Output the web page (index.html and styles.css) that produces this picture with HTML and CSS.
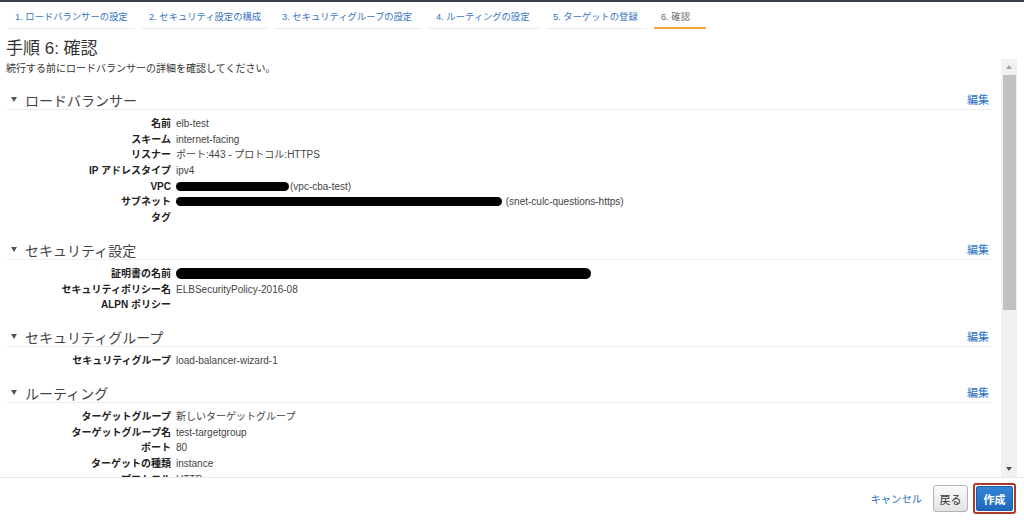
FILE: index.html
```html
<!DOCTYPE html>
<html lang="ja">
<head>
<meta charset="utf-8">
<title>手順 6: 確認</title>
<link rel="stylesheet" href="styles.css">
</head>
<body>
<div class="topbar"></div>
<nav class="tabs">
  <div class="tab t1">1. ロードバランサーの設定</div>
  <div class="tab t2">2. セキュリティ設定の構成</div>
  <div class="tab t3">3. セキュリティグループの設定</div>
  <div class="tab t4">4. ルーティングの設定</div>
  <div class="tab t5">5. ターゲットの登録</div>
  <div class="tab t6 current">6. 確認</div>
</nav>
<h1 class="title">手順 6: 確認</h1>
<div class="viewport">
  <div class="scroll">
    <p class="intro">続行する前にロードバランサーの詳細を確認してください。</p>

    <section class="sec">
      <div class="sec-head"><span class="caret"></span><span class="sec-title">ロードバランサー</span><a class="edit">編集</a></div>
      <dl class="rows">
        <dt>名前</dt><dd>elb-test</dd>
        <dt>スキーム</dt><dd>internet-facing</dd>
        <dt>リスナー</dt><dd>ポート:443 - プロトコル:HTTPS</dd>
        <dt>IP アドレスタイプ</dt><dd>ipv4</dd>
        <dt>VPC</dt><dd><span class="redact r-vpc"></span>(vpc-cba-test)</dd>
        <dt>サブネット</dt><dd><span class="redact r-subnet"></span> (snet-culc-questions-https)</dd>
        <dt>タグ</dt><dd></dd>
      </dl>
    </section>

    <section class="sec">
      <div class="sec-head"><span class="caret"></span><span class="sec-title">セキュリティ設定</span><a class="edit">編集</a></div>
      <dl class="rows">
        <dt>証明書の名前</dt><dd><span class="redact r-cert"></span></dd>
        <dt>セキュリティポリシー名</dt><dd>ELBSecurityPolicy-2016-08</dd>
        <dt>ALPN ポリシー</dt><dd></dd>
      </dl>
    </section>

    <section class="sec">
      <div class="sec-head"><span class="caret"></span><span class="sec-title">セキュリティグループ</span><a class="edit">編集</a></div>
      <dl class="rows">
        <dt>セキュリティグループ</dt><dd>load-balancer-wizard-1</dd>
      </dl>
    </section>

    <section class="sec">
      <div class="sec-head"><span class="caret"></span><span class="sec-title">ルーティング</span><a class="edit">編集</a></div>
      <dl class="rows">
        <dt>ターゲットグループ</dt><dd>新しいターゲットグループ</dd>
        <dt>ターゲットグループ名</dt><dd>test-targetgroup</dd>
        <dt>ポート</dt><dd>80</dd>
        <dt>ターゲットの種類</dt><dd>instance</dd>
        <dt>プロトコル</dt><dd>HTTP</dd>
      </dl>
    </section>
  </div>
  <div class="scrollbar">
    <div class="sb-btn"><span class="sb-up"></span></div>
    <div class="sb-thumb"></div>
    <div class="sb-fill"></div>
    <div class="sb-btn"><span class="sb-down"></span></div>
  </div>
</div>
<footer class="footer">
  <a class="cancel">キャンセル</a>
  <button class="btn-back">戻る</button>
  <div class="highlight"><button class="btn-create">作成</button></div>
</footer>
</body>
</html>
```
FILE: styles.css
```css
html, body {
  margin: 0;
  padding: 0;
  background: #ffffff;
}
body {
  width: 1024px;
  height: 526px;
  overflow: hidden;
  font-family: "Liberation Sans", "Noto Sans CJK JP", sans-serif;
  font-size: 10px;
  color: #333;
}
.topbar {
  height: 2px;
  background: #39404a;
}
.tabs {
  display: flex;
  gap: 7px;
  padding-left: 8px;
}
.tab {
  box-sizing: border-box;
  padding: 9px 0 4px 7px;
  line-height: 13px;
  font-size: 9.3px;
  color: #3674c0;
  white-space: nowrap;
  border-bottom: 1px solid #ececec;
}
.t1 { width: 127px; }
.t2 { width: 126px; }
.t3 { width: 147px; }
.t4 { width: 110px; }
.t5 { width: 101px; }
.t6 { width: 52px; }
.tab.current {
  color: #666;
  padding-bottom: 3px;
  border-bottom: 2px solid #f7a535;
}
.title {
  margin: 0;
  padding: 10px 0 0 6px;
  font-size: 17px;
  line-height: 20px;
  font-weight: normal;
  color: #333;
}
.viewport {
  display: flex;
  height: 418px;
}
.scroll {
  flex: 1;
  overflow: hidden;
}
.intro {
  margin: 0;
  padding: 4px 0 0 6px;
  line-height: 12px;
  font-size: 10px;
  color: #333;
}
.sec {
  margin: 18px 9px 0 7px;
}
.sec + .sec {
  margin-top: 17.3px;
}
.sec-head {
  display: flex;
  align-items: center;
  height: 16px;
  border-bottom: 1px solid #ededed;
}
.caret {
  width: 0;
  height: 0;
  margin: -3px 8px 0 4px;
  border-left: 3px solid transparent;
  border-right: 3px solid transparent;
  border-top: 5px solid #555;
}
.sec-title {
  flex: 1;
  font-size: 14px;
  line-height: 16px;
  color: #444;
}
.edit {
  align-self: flex-start;
  margin-top: 1px;
  padding-right: 3px;
  font-size: 11px;
  line-height: 12px;
  color: #1f6fc6;
}
.rows {
  display: grid;
  grid-template-columns: 164px 1fr;
  grid-auto-rows: 15.67px;
  column-gap: 5px;
  margin: 0;
  padding-top: 6px;
  line-height: 15.67px;
}
.rows dt {
  text-align: right;
  font-weight: bold;
  color: #222;
  white-space: nowrap;
}
.rows dd {
  margin: 0;
  color: #444;
  white-space: nowrap;
}
.redact {
  display: inline-block;
  height: 9px;
  background: #000;
  border-radius: 5px;
  vertical-align: -1px;
  margin-right: 1px;
}
.r-vpc { width: 113px; }
.r-subnet { width: 326px; }
.r-cert { width: 415px; height: 11px; border-radius: 6px; vertical-align: -2px; }

.scrollbar {
  display: flex;
  flex-direction: column;
  width: 16px;
  margin-right: 7px;
  background: #f1f1f1;
}
.sb-btn {
  height: 16px;
  display: flex;
  align-items: center;
  justify-content: center;
}
.sb-up {
  width: 0;
  height: 0;
  border-left: 3.5px solid transparent;
  border-right: 3.5px solid transparent;
  border-bottom: 4px solid #a3a3a3;
}
.sb-down {
  width: 0;
  height: 0;
  border-left: 3.5px solid transparent;
  border-right: 3.5px solid transparent;
  border-top: 4px solid #505050;
}
.sb-thumb {
  height: 235px;
  margin: 0 1px 0 2px;
  background: #c1c1c1;
}
.sb-fill {
  flex: 1;
}
.footer {
  display: flex;
  justify-content: flex-end;
  align-items: center;
  height: 31px;
  padding: 5px 8px 12px 0;
  border-top: 1px solid #e8e8e8;
}
.cancel {
  margin-right: 11px;
  font-size: 10.3px;
  color: #1f6fc6;
}
.btn-back {
  box-sizing: border-box;
  width: 35px;
  height: 27px;
  margin-right: 5px;
  padding: 0;
  font-family: inherit;
  font-size: 11px;
  color: #333;
  background: linear-gradient(#fafafa, #e3e3e3);
  border: 1px solid #b3b3b3;
  border-radius: 3px;
}
.highlight {
  display: flex;
  padding: 1px;
  border: 2px solid #b0392a;
  border-radius: 3px;
}
.btn-create {
  box-sizing: border-box;
  width: 37px;
  height: 25px;
  padding: 0;
  font-family: inherit;
  font-size: 11px;
  font-weight: bold;
  color: #fff;
  background: linear-gradient(#3384d6, #1f69bb);
  border: 1px solid #1b5ca6;
  border-radius: 2px;
}
```
